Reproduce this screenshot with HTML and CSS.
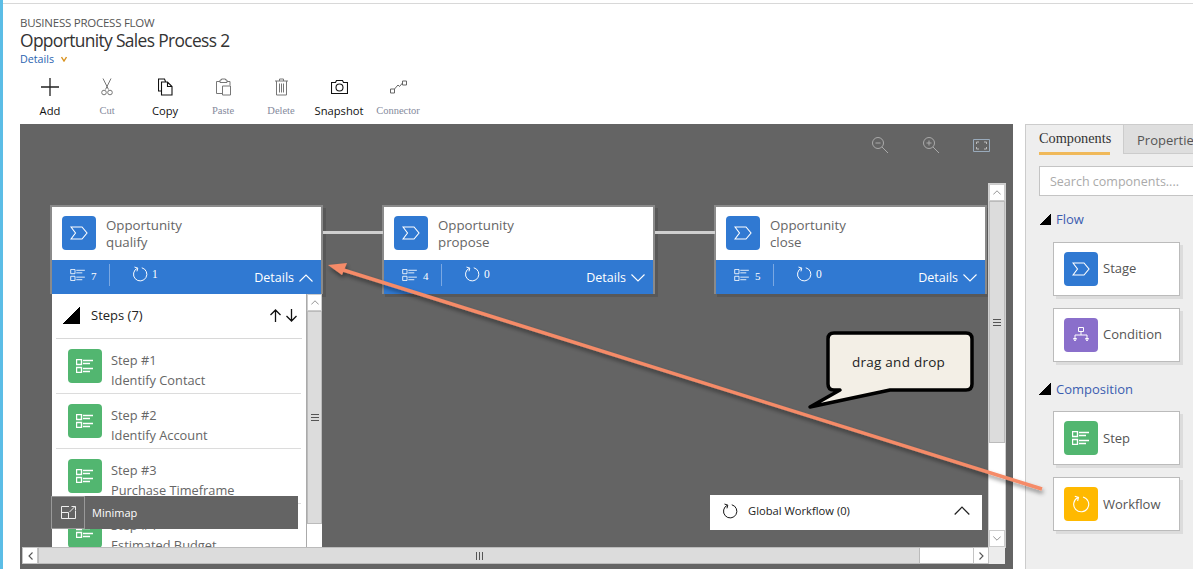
FILE: index.html
```html
<!DOCTYPE html>
<html lang="en">
<head>
<meta charset="utf-8">
<title>Opportunity Sales Process 2</title>
<link rel="stylesheet" href="styles.css">
</head>
<body>
<svg width="0" height="0" class="defs">
  <defs>
    <symbol id="chev" viewBox="0 0 18 14"><path d="M1 1H12L17 7L12 13H1L5.500 7Z" fill="none" stroke="currentColor" stroke-width="1.100"/></symbol>
    <symbol id="list" viewBox="0 0 18 14"><path d="M.5.500h5v5h-5zM.5 8.500h5v5h-5zM7 1.500h10M7 4.500h7M7 9.500h10M7 12.500h7" fill="none" stroke="currentColor"/></symbol>
    <symbol id="loop" viewBox="0 0 18 18"><path d="M6 2.500A7.500 7.500 0 1 0 11 2M2.800 1.200L6.500 2.400L5.600 6" fill="none" stroke="currentColor" stroke-width="1.100"/></symbol>
    <symbol id="up" viewBox="0 0 14 8"><path d="M.5 7.500L7 1L13.500 7.500" fill="none" stroke="currentColor" stroke-width="1.100"/></symbol>
    <symbol id="down" viewBox="0 0 14 8"><path d="M.5.500L7 7L13.500.500" fill="none" stroke="currentColor" stroke-width="1.100"/></symbol>
  </defs>
</svg>
<div class="app">
  <header class="head">
    <div class="eyebrow">BUSINESS PROCESS FLOW</div>
    <h1 class="title">Opportunity Sales Process 2</h1>
    <div class="details-link">Details <svg class="mark" width="6" height="6" viewBox="0 0 6 6"><path d="M.5 1L3 5L5.500 1" fill="none" stroke="#d9921e" stroke-width="1.400"/></svg></div>
  </header>
  <nav class="toolbar">
    <div class="tool tool-add"><svg width="18" height="18" viewBox="0 0 18 18"><path d="M9 0V18M0 9H18" stroke="#222" stroke-width="1.300"/></svg><span>Add</span></div>
    <div class="tool tool-cut off"><svg width="12" height="17" viewBox="0 0 12 17"><path d="M2 0L7.500 11M10 0L4.500 11" stroke="#777" fill="none"/><circle cx="3" cy="14" r="2.300" stroke="#777" fill="none"/><circle cx="9" cy="14" r="2.300" stroke="#777" fill="none"/></svg><span>Cut</span></div>
    <div class="tool tool-copy"><svg width="15" height="17" viewBox="0 0 15 17"><path d="M3.500 12.500H.5V.5H6.500L7.500 3M3.500 3.500H9.500L14 8V16.500H3.500ZM9.500 3.500V8H14" fill="none" stroke="#111" stroke-width="1.100"/></svg><span>Copy</span></div>
    <div class="tool tool-paste off"><svg width="15" height="17" viewBox="0 0 15 17"><path d="M4 3H.5V15H6M11 3H14V7M4 1.500H5.500V.5H9.500V1.500H11V4H4ZM6.500 7.500H14.500V16.500H6.500Z" fill="none" stroke="#777"/></svg><span>Paste</span></div>
    <div class="tool tool-delete off"><svg width="13" height="17" viewBox="0 0 13 17"><path d="M0 2.500H13M4.500 2.500V.5H8.500V2.500M1.500 2.500V16.500H11.500V2.500M4.500 5V14M6.500 5V14M8.500 5V14" fill="none" stroke="#777"/></svg><span>Delete</span></div>
    <div class="tool tool-snap"><svg width="17" height="14" viewBox="0 0 17 14"><path d="M.5 2.500H4.500L5.500.5H11.500L12.500 2.500H16.500V13.500H.5Z" fill="none" stroke="#111" stroke-width="1.100"/><circle cx="8.500" cy="7.500" r="3.500" fill="none" stroke="#111" stroke-width="1.100"/></svg><span>Snapshot</span></div>
    <div class="tool tool-conn off"><svg width="17" height="13" viewBox="0 0 17 13"><path d="M.5 8.500h4v4h-4zM12.500.5h4v4h-4zM4.500 8.500L8 4.500L9.500 6L12.500 2.500" fill="none" stroke="#666"/></svg><span>Connector</span></div>
  </nav>
  <main class="main">
    <section class="canvas">
      <div class="zoom-tools">
        <svg width="18" height="18" viewBox="0 0 18 18"><circle cx="7" cy="7" r="5.500" fill="none" stroke="#aaa"/><path d="M4.500 7H9.500M11 11L17 17" stroke="#aaa" fill="none"/></svg>
        <svg width="18" height="18" viewBox="0 0 18 18"><circle cx="7" cy="7" r="5.500" fill="none" stroke="#aaa"/><path d="M4.500 7H9.500M7 4.500V9.500M11 11L17 17" stroke="#aaa" fill="none"/></svg>
        <svg width="17" height="13" viewBox="0 0 17 13"><path d="M.5.500h16v12H.5z" fill="none" stroke="#9ab"/><path d="M3.500 5V3H6M11 3h2.500V5M13.500 8v2H11M6 10H3.500V8" fill="none" stroke="#bbb"/></svg>
      </div>

      <article class="stage s1">
        <div class="stage-top"><span class="tile blue"><svg width="18" height="14"><use href="#chev"/></svg></span><div class="stage-name"><div>Opportunity</div><div>qualify</div></div></div>
        <div class="stage-bar">
          <span class="cnt cnt-a"><svg width="18" height="12"><use href="#list"/></svg><em>7</em></span>
          <span class="cnt cnt-b"><svg width="16" height="16"><use href="#loop"/></svg><em>1</em></span>
          <span class="bar-details">Details <svg width="14" height="8"><use href="#up"/></svg></span>
        </div>
      </article>

      <div class="steps">
        <div class="steps-body">
          <div class="steps-head"><span class="tri"></span><span class="steps-title">Steps (7)</span>
            <svg class="arrows" width="27" height="13" viewBox="0 0 27 13"><path d="M5.500 13V1M.5 6L5.500 1L10.500 6M21.500 0V12M16.500 7L21.500 12L26.500 7" fill="none" stroke="#111" stroke-width="1.300"/></svg></div>
          <div class="step"><span class="tile green"><svg width="18" height="14"><use href="#list"/></svg></span><div><div>Step #1</div><div>Identify Contact</div></div></div>
          <div class="step"><span class="tile green"><svg width="18" height="14"><use href="#list"/></svg></span><div><div>Step #2</div><div>Identify Account</div></div></div>
          <div class="step"><span class="tile green"><svg width="18" height="14"><use href="#list"/></svg></span><div><div>Step #3</div><div>Purchase Timeframe</div></div></div>
          <div class="step"><span class="tile green"><svg width="18" height="14"><use href="#list"/></svg></span><div><div>Step #4</div><div>Estimated Budget</div></div></div>
        </div>
        <div class="vscroll small">
          <span class="sb-btn"><svg width="8" height="5"><use href="#up"/></svg></span>
          <span class="sb-track t1"><span class="grip"></span></span>
          <span class="sb-rest"></span>
        </div>
      </div>

      <article class="stage s2">
        <div class="stage-top"><span class="tile blue"><svg width="18" height="14"><use href="#chev"/></svg></span><div class="stage-name"><div>Opportunity</div><div>propose</div></div></div>
        <div class="stage-bar">
          <span class="cnt cnt-a"><svg width="18" height="12"><use href="#list"/></svg><em>4</em></span>
          <span class="cnt cnt-b"><svg width="16" height="16"><use href="#loop"/></svg><em>0</em></span>
          <span class="bar-details">Details <svg width="14" height="8"><use href="#down"/></svg></span>
        </div>
      </article>

      <article class="stage s3">
        <div class="stage-top"><span class="tile blue"><svg width="18" height="14"><use href="#chev"/></svg></span><div class="stage-name"><div>Opportunity</div><div>close</div></div></div>
        <div class="stage-bar">
          <span class="cnt cnt-a"><svg width="18" height="12"><use href="#list"/></svg><em>5</em></span>
          <span class="cnt cnt-b"><svg width="16" height="16"><use href="#loop"/></svg><em>0</em></span>
          <span class="bar-details">Details <svg width="14" height="8"><use href="#down"/></svg></span>
        </div>
      </article>

      <div class="connector c1"></div>
      <div class="connector c2"></div>

      <div class="minimap">
        <span class="mini-icon"><svg width="15" height="13" viewBox="0 0 15 13"><path d="M8 .5H.5V12.500H14.500V5M.5 6.500H7.500V12.500M8.500 6L14 .5M10.500.5H14.500V4.500" fill="none" stroke="#eee"/></svg></span>
        <span class="mini-text">Minimap</span>
      </div>

      <div class="global">
        <svg class="g-loop" width="16" height="16"><use href="#loop"/></svg>
        <span class="g-text">Global Workflow (0)</span>
        <svg class="g-chev" width="16" height="9"><use href="#up"/></svg>
      </div>

      <div class="vscroll main-v">
        <span class="sb-btn"><svg width="8" height="5"><use href="#up"/></svg></span>
        <span class="sb-track t2"><span class="grip"></span></span>
        <span class="sb-rest"></span>
        <span class="sb-btn"><svg width="8" height="5"><use href="#down"/></svg></span>
      </div>
      <div class="hscroll">
        <span class="hb-btn"><svg width="5" height="8" viewBox="0 0 5 8"><path d="M4.500.5L1 4L4.500 7.500" fill="none" stroke="#555" stroke-width="1.100"/></svg></span>
        <span class="hb-track"><span class="grip-h"></span></span>
        <span class="hb-rest"></span>
        <span class="hb-btn"><svg width="5" height="8" viewBox="0 0 5 8"><path d="M.5.500L4 4L.5 7.500" fill="none" stroke="#555" stroke-width="1.100"/></svg></span>
        <span class="hb-corner"></span>
      </div>
    </section>

    <aside class="panel">
      <div class="tabs">
        <span class="tab active">Components</span>
        <span class="tab other">Properties</span>
      </div>
      <div class="search">Search components....</div>
      <div class="group"><span class="tri small-tri"></span>Flow</div>
      <div class="comp"><span class="tile blue"><svg width="18" height="14"><use href="#chev"/></svg></span><span class="comp-label">Stage</span></div>
      <div class="comp"><span class="tile purple"><svg width="16" height="16" viewBox="0 0 16 16"><path d="M5.500.5h5v4h-5zM8 4.500V8M2 12V8H14V12M.5 11.500h3L2 14ZM12.500 11.500h3L14 14Z" fill="none" stroke="#fff"/></svg></span><span class="comp-label">Condition</span></div>
      <div class="group g2"><span class="tri small-tri"></span>Composition</div>
      <div class="comp"><span class="tile green"><svg width="18" height="14"><use href="#list"/></svg></span><span>Step</span></div>
      <div class="comp"><span class="tile amber"><svg width="18" height="18"><use href="#loop"/></svg></span><span>Workflow</span></div>
    </aside>
  </main>
</div>

<svg class="callout-shape" width="170" height="82" viewBox="0 0 170 82">
  <path d="M26 2H158Q164 2 164 8V53Q164 59 158 59H82L2 76L32 59H26Q20 59 20 53V8Q20 2 26 2Z" fill="#f3efe6" stroke="#000" stroke-width="3.500" stroke-linejoin="round"/>
</svg>
<div class="callout-text">drag and drop</div>

<svg class="arrow" width="1193" height="569" viewBox="0 0 1193 569">
  <defs><filter id="sh" x="-5%" y="-5%" width="110%" height="120%"><feDropShadow dx="1" dy="3" stdDeviation="2" flood-color="#000" flood-opacity=".45"/></filter></defs>
  <g filter="url(#sh)"><path d="M1042 489L340 269" stroke="#f58b68" stroke-width="3.500" fill="none"/><path d="M328 265L347 263L342 275Z" fill="#f58b68"/></g>
</svg>
</body>
</html>
```

FILE: styles.css
```css
* { box-sizing: border-box; }
html, body { margin: 0; padding: 0; height: 569px; overflow: hidden; background: #fff; }
body { font-family: "Open Sans", "Noto Sans", sans-serif; color: #444; position: relative; }
.defs { position: absolute; }
.app { height: 569px; display: flex; flex-direction: column; border-left: 3px solid #5bbde6; }
.app::before { content: ""; display: block; height: 1px; background: #d8d8d8; margin-top: 3px; flex: none; }

.head { padding: 12px 0 0 17px; height: 60px; flex: none; }
.eyebrow { font-size: 11.500px; line-height: 14px; color: #555; letter-spacing: -.25px; }
.title { margin: 0; font-size: 17.400px; line-height: 21px; font-weight: 400; color: #333; letter-spacing: -.65px; }
.details-link { font-size: 10.700px; line-height: 14px; margin-top: 1px; color: #2a63b0; }
.mark { margin-left: 4px; vertical-align: 1px; }

.toolbar { height: 60px; flex: none; display: flex; align-items: flex-start; position: relative; padding-top: 14px; }
.tool { flex: none; display: flex; flex-direction: column; align-items: center; height: 45px; font-size: 11.200px; color: #111; width: 60px; }
.tool svg { height: 18px; }
.tool span { display: block; margin-top: 8px; line-height: 14px; white-space: nowrap; }
.tool.off { font-family: "Liberation Serif", serif; font-size: 10.500px; color: #858a9c; }
.tool-add { margin-left: 17px; }
.tool-cut { margin-left: -3px; }
.tool-copy { margin-left: -2px; }
.tool-paste { margin-left: -2px; }
.tool-delete { margin-left: -2px; }
.tool-snap { margin-left: -2px; }
.tool-conn { margin-left: -1px; }

.main { flex: 1; display: flex; padding-left: 17px; min-height: 0; }
.canvas { width: 993px; flex: none; background: #646464; position: relative; overflow: hidden; }

.zoom-tools { position: absolute; left: 851px; top: 12px; display: flex; gap: 33px; align-items: center; }
.connector { position: absolute; top: 107px; height: 3px; background: #cfcfcf; }
.c1 { left: 303px; width: 60px; }
.c2 { left: 635px; width: 60px; }

.stage { position: absolute; top: 81px; width: 273px; height: 89px; border: 2px solid #8a8a8a; background: #fff; box-shadow: 3px 3px 0 #585858; }
.s1 { left: 30px; }
.s2 { left: 362px; }
.s3 { left: 694px; }
.stage-top { height: 53px; display: flex; align-items: flex-start; padding: 9px 0 0 10px; }
.tile { width: 34px; height: 34px; border-radius: 4px; flex: none; display: flex; align-items: center; justify-content: center; color: #fff; }
.blue { background: #3079d2; }
.green { background: #52b670; stroke-width: 1.400; }
.purple { background: #8a6fcb; }
.amber { background: #ffb900; }
.stage-name { margin-left: 10px; font-size: 13.300px; line-height: 17px; color: #666; margin-top: 1px; }
.stage-bar { height: 34px; background: #3079d2; color: #fff; position: relative; display: flex; font-size: 12.500px; }
.cnt { position: absolute; top: 6px; display: flex; align-items: flex-start; }
.cnt em { font-style: normal; font-family: "Liberation Serif", serif; font-size: 11px; line-height: 14px; margin-left: 4px; }
.cnt-a { left: 17px; top: 9px; height: 20px; }
.cnt-b { left: 80px; top: 6px; }
.cnt-b em { line-height: 17px; margin-left: 4px; font-size: 11.500px; }
.cnt-a::after { content: ""; position: absolute; left: 40px; top: -5px; height: 22px; width: 1px; background: #7aa8e2; }
.bar-details { position: absolute; right: 8px; top: 8px; line-height: 20px; display: flex; align-items: center; gap: 5px; }

.steps { position: absolute; left: 32px; top: 170px; width: 270px; height: 253px; background: #fff; display: flex; overflow: hidden; }
.steps-body { width: 254px; flex: none; }
.steps-head { height: 45px; margin: 0 4px; display: flex; align-items: center; color: #222; font-size: 13px; border-bottom: 1px solid #d8d8d8; padding-bottom: 2px; }
.tri { width: 17px; height: 17px; background: linear-gradient(135deg, transparent 50%, #000 50%); flex: none; margin-left: 7px; }
.steps-title { margin-left: 11px; }
.arrows { margin-left: auto; margin-right: 5px; }
.step { height: 55px; margin: 0 5px 0 4px; display: flex; padding: 10px 0 0 12px; gap: 9px; font-size: 12.800px; line-height: 20px; color: #666; border-bottom: 1px solid #dcdcdc; }
.step > div { margin-top: 1px; white-space: nowrap; }

.vscroll { position: absolute; display: flex; flex-direction: column; background: #fff; }
.vscroll.small { left: 254px; top: 0; width: 16px; height: 253px; border-left: 1px solid #aaa; }
.main-v { left: 969px; top: 60px; width: 16px; height: 363px; outline: 1px solid #cfcfcf; }
.sb-btn { height: 17px; flex: none; background: #fff; display: flex; align-items: center; justify-content: center; color: #555; border: 1px solid #ccc; }
.sb-track { background: #dcdcdc; border: 1px solid #bbb; display: flex; align-items: center; justify-content: center; flex: none; }
.t1 { height: 213px; }
.t2 { height: 242px; }
.sb-rest { flex: 1; background: #fff; }
.grip { display: block; width: 8px; height: 7px; background: repeating-linear-gradient(180deg, #555 0 1px, transparent 1px 3px); }
.grip-h { display: block; width: 7px; height: 8px; background: repeating-linear-gradient(90deg, #555 0 1px, transparent 1px 3px); }

.hscroll { position: absolute; left: 2px; top: 423px; width: 983px; height: 17px; display: flex; background: #fff; }
.hb-btn { width: 16px; flex: none; display: flex; align-items: center; justify-content: center; background: #fff; border: 1px solid #c4c4c4; }
.hb-track { width: 882px; flex: none; background: #dcdcdc; display: flex; align-items: center; justify-content: center; border: 1px solid #bbb; }
.hb-rest { flex: 1; background: #fff; border-top: 1px solid #bbb; border-bottom: 1px solid #bbb; }
.hb-corner { width: 16px; flex: none; background: #ececec; }

.minimap { position: absolute; left: 31px; top: 372px; width: 247px; height: 33px; background: #646464; display: flex; align-items: center; color: #fff; font-size: 11px; padding-bottom: 1px; }
.mini-icon { width: 34px; height: 33px; border: 1px solid #999; display: flex; align-items: center; justify-content: center; flex: none; margin-bottom: -1px; }
.mini-text { margin-left: 7px; }

.global { position: absolute; left: 690px; top: 371px; width: 272px; height: 35px; background: #fff; display: flex; align-items: center; color: #222; font-size: 11.200px; padding-bottom: 4px; }
.g-loop { margin-left: 12px; color: #111; }
.g-text { margin-left: 10px; }
.g-chev { margin-left: auto; margin-right: 12px; color: #222; }

.panel { margin-left: 12px; flex: 1; border: 1px solid #ccc; border-bottom: 0; border-right: 0; background: #eee; min-width: 0; overflow: hidden; }
.tabs { height: 29px; display: flex; }
.tab { white-space: nowrap; line-height: 26px; }
.tab.active { margin-left: 13px; font-family: "Liberation Serif", serif; font-size: 14.300px; font-weight: 400; color: #333; height: 30px; border-bottom: 3px solid #f0b95a; width: 71px; }
.tab.other { margin-left: 13px; padding-left: 13px; font-size: 13px; background: #dedede; border: 1px solid #ccc; border-top: 0; flex: 1; color: #555; padding-top: 1px; line-height: 28px; }
.search { margin: 12px 0 0 13px; height: 30px; border: 1px solid #c4c4c4; border-right: 0; background: #fff; color: #aaa; font-size: 12.500px; line-height: 30px; padding-left: 10px; white-space: nowrap; overflow: hidden; width: 160px; }
.group { margin: 12px 0 0 13px; display: flex; align-items: center; font-size: 13px; color: #3b5db0; line-height: 22px; }
.g2 { margin-top: 16px; }
.small-tri { width: 12px; height: 12px; margin: 0 5px 0 0; }
.comp { margin: 12px 0 0 27px; width: 127px; height: 54px; background: #fff; border: 1px solid #bbb; box-shadow: 3px 3px 0 #dcdcdc; display: flex; align-items: center; padding-left: 10px; gap: 5px; font-size: 13px; color: #555; }
.comp-label { margin-top: -2px; }
.g2 + .comp { margin-top: 11px; }

.callout-shape { position: absolute; left: 808px; top: 331px; }
.callout-text { position: absolute; left: 852px; top: 353px; font-size: 13.500px; letter-spacing: .25px; line-height: 18px; color: #222; }
.arrow { position: absolute; left: 0; top: 0; pointer-events: none; }
```
